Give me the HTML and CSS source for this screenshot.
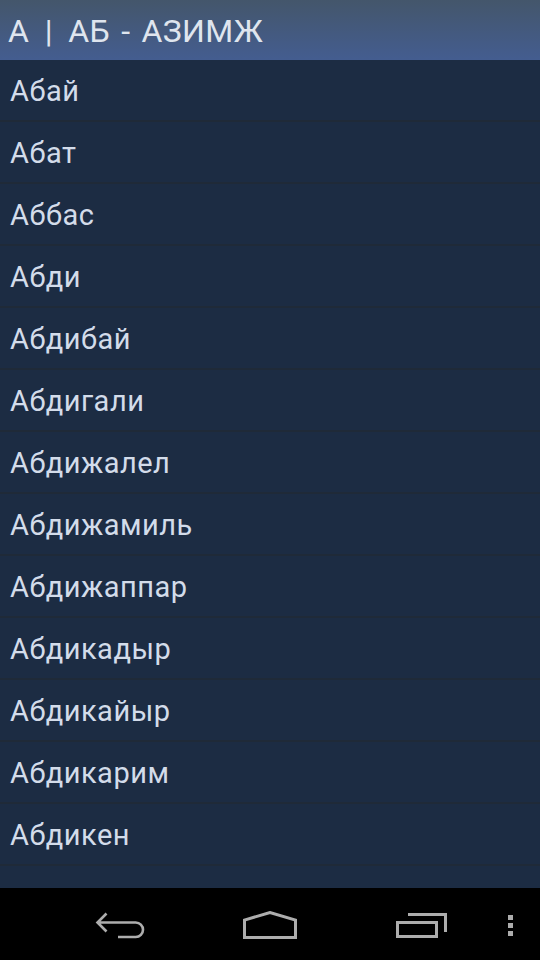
FILE: index.html
```html
<!DOCTYPE html>
<html lang="ru">
<head>
<meta charset="utf-8">
<title>Имена</title>
<link rel="stylesheet" href="styles.css">
</head>
<body>
<div class="screen">
  <header class="title"><span>А</span><span>|</span><span class="title-range">АБ - АЗИМЖ</span></header>
  <div class="list-wrap">
    <ul class="list">
      <li class="row">Абай</li>
      <li class="row">Абат</li>
      <li class="row">Аббас</li>
      <li class="row">Абди</li>
      <li class="row">Абдибай</li>
      <li class="row">Абдигали</li>
      <li class="row">Абдижалел</li>
      <li class="row">Абдижамиль</li>
      <li class="row">Абдижаппар</li>
      <li class="row">Абдикадыр</li>
      <li class="row">Абдикайыр</li>
      <li class="row">Абдикарим</li>
      <li class="row">Абдикен</li>
      <li class="row">Абдикерим</li>
    </ul>
    <div class="fade"></div>
  </div>
  <nav class="navbar">
    <svg class="nav-back" width="52" height="30" viewBox="0 0 52 30"><path d="M12.500 1.500 L3.500 10.500 L12.500 19.500 M3.500 10.500 H41.750 A7.250 7.250 0 0 1 41.750 25 H24" fill="none" stroke="#adadad" stroke-width="2.600"/></svg>
    <svg class="nav-home" width="56" height="30" viewBox="0 0 56 30"><path d="M2.500 26.500 V9 L28 1.500 L53.500 9 V26.500 Z" fill="none" stroke="#adadad" stroke-width="3"/></svg>
    <svg class="nav-recent" width="52" height="28" viewBox="0 0 52 28"><path d="M1.500 9.500 H40.500 V23.500 H1.500 Z M12 1.500 H49.500 V19" fill="none" stroke="#adadad" stroke-width="3"/></svg>
    <svg class="nav-menu" width="5" height="21" viewBox="0 0 5 21"><path d="M0 0h5v5H0zM0 8h5v5H0zM0 16h5v5H0z" fill="#adadad"/></svg>
  </nav>
</div>
</body>
</html>
```
FILE: styles.css
```css
* { box-sizing: border-box; }
html, body { margin: 0; padding: 0; background: #000; }
.screen {
  width: 540px;
  height: 960px;
  display: flex;
  flex-direction: column;
  overflow: hidden;
  font-family: Roboto, "Noto Sans", sans-serif;
}
.title {
  flex: 0 0 60px;
  display: flex;
  gap: 15.5px;
  padding: 12px 0 0 8px;
  font-size: 32px;
  line-height: 38px;
  letter-spacing: 0.3px;
  color: #dfe5ee;
  white-space: pre;
  background: linear-gradient(#44566b, #445d90);
}
.title-range { word-spacing: 3px; }
.list-wrap {
  flex: 1 1 auto;
  min-height: 0;
  position: relative;
  overflow: hidden;
  background: #1c2c43;
}
.list {
  margin: 0;
  padding: 0;
  list-style: none;
}
.row {
  height: 62px;
  padding: 12px 0 0 10px;
  font-size: 29px;
  line-height: 38px;
  letter-spacing: 0.5px;
  color: #d3dcea;
  border-bottom: 2px solid #1f2a38;
}
.fade {
  position: absolute;
  left: 0;
  right: 0;
  bottom: 0;
  height: 22px;
  background: linear-gradient(rgba(28, 44, 67, 0.55), #1c2c43 45%);
}
.navbar {
  flex: 0 0 72px;
  position: relative;
  background: #000;
}
.navbar svg { position: absolute; }
.nav-back { left: 94px; top: 24px; }
.nav-home { left: 242px; top: 23px; }
.nav-recent { left: 396px; top: 25px; }
.nav-menu { left: 508px; top: 27px; }
```
